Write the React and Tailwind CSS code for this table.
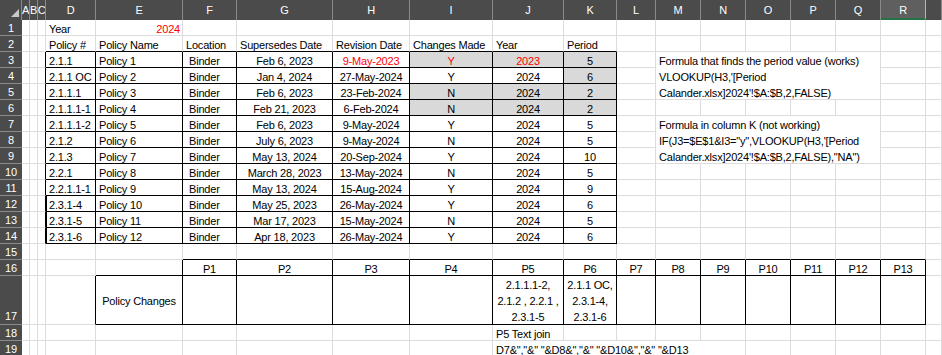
import clsx from 'clsx';

const COLS = ['A', 'B', 'C', 'D', 'E', 'F', 'G', 'H', 'I', 'J', 'K', 'L', 'M', 'N', 'O', 'P', 'Q', 'R', 'S'];
const ROWS = Array.from({ length: 19 }, (_, i) => i + 1);

const policies = [
  ['2.1.1', 'Policy 1', 'Feb 6, 2023', '9-May-2023', 'Y', '2023', '5'],
  ['2.1.1 OC', 'Policy 2', 'Jan 4, 2024', '27-May-2024', 'Y', '2024', '6'],
  ['2.1.1.1', 'Policy 3', 'Feb 6, 2023', '23-Feb-2024', 'N', '2024', '2'],
  ['2.1.1.1-1', 'Policy 4', 'Feb 21, 2023', '6-Feb-2024', 'N', '2024', '2'],
  ['2.1.1.1-2', 'Policy 5', 'Feb 6, 2023', '9-May-2024', 'Y', '2024', '5'],
  ['2.1.2', 'Policy 6', 'July 6, 2023', '9-May-2024', 'N', '2024', '5'],
  ['2.1.3', 'Policy 7', 'May 13, 2024', '20-Sep-2024', 'Y', '2024', '10'],
  ['2.2.1', 'Policy 8', 'March 28, 2023', '13-May-2024', 'N', '2024', '5'],
  ['2.2.1.1-1', 'Policy 9', 'May 13, 2024', '15-Aug-2024', 'Y', '2024', '9'],
  ['2.3.1-4', 'Policy 10', 'May 25, 2023', '26-May-2024', 'Y', '2024', '6'],
  ['2.3.1-5', 'Policy 11', 'Mar 17, 2023', '15-May-2024', 'N', '2024', '5'],
  ['2.3.1-6', 'Policy 12', 'Apr 18, 2023', '26-May-2024', 'Y', '2024', '6'],
];

const GRAY = ['I3', 'J3', 'K3', 'K4', 'I5', 'J5', 'K5', 'I6', 'J6', 'K6'];
const RED = ['E1', 'H3', 'I3', 'J3'];

// build the sheet contents
const cells = {
  D1: { v: 'Year' },
  E1: { v: '2024', al: 'right' },
  D2: { v: 'Policy #' },
  E2: { v: 'Policy Name' },
  F2: { v: 'Location' },
  G2: { v: 'Supersedes Date' },
  H2: { v: 'Revision Date' },
  I2: { v: 'Changes Made' },
  J2: { v: 'Year' },
  K2: { v: 'Period' },
  M3: {
    lines: ['Formula that finds the period value (works)', "VLOOKUP(H3,'[Period", "Calander.xlsx]2024'!$A:$B,2,FALSE)"],
    cs: 5,
    rs: 3,
  },
  M7: {
    lines: ['Formula in column K (not working)', 'IF(J3=$E$1&I3="y",VLOOKUP(H3,\'[Period', 'Calander.xlsx]2024\'!$A:$B,2,FALSE),"NA")'],
    cs: 5,
    rs: 3,
  },
  E17: { v: 'Policy Changes', al: 'center', mid: true },
  J17: { lines: ['2.1.1.1-2,', '2.1.2 , 2.2.1 ,', '2.3.1-5'], al: 'center', mid: true },
  K17: { lines: ['2.1.1 OC,', '2.3.1-4,', '2.3.1-6'], al: 'center', mid: true },
  J18: { v: 'P5 Text join' },
  J19: { v: 'D7&","&" "&D8&","&" "&D10&","&" "&D13', cs: 5 },
};

policies.forEach((p, i) => {
  const r = i + 3;
  cells['D' + r] = { v: p[0] };
  cells['E' + r] = { v: p[1] };
  cells['F' + r] = { v: 'Binder', indent: true };
  cells['G' + r] = { v: p[2], al: 'center' };
  cells['H' + r] = { v: p[3], al: 'center' };
  cells['I' + r] = { v: p[4], al: 'center' };
  cells['J' + r] = { v: p[5], al: 'center' };
  cells['K' + r] = { v: p[6], al: 'center' };
});

COLS.slice(5, 18).forEach((c, i) => {
  cells[c + '16'] = { v: 'P' + (i + 1), al: 'center' };
});

const inRange = (n, a, b) => n >= a && n <= b;

// c is 1-based column index (A = 1)
const rightBlack = (r, c) =>
  (inRange(r, 3, 14) && inRange(c, 3, 11)) || (r === 16 && inRange(c, 5, 18)) || (r === 17 && inRange(c, 4, 18));

const bottomBlack = (r, c) =>
  (inRange(r, 2, 14) && inRange(c, 4, 11)) || (r === 15 && inRange(c, 6, 18)) || (inRange(r, 16, 17) && inRange(c, 5, 18));

// cells hidden under merges
const covered = new Set();
Object.entries(cells).forEach(([key, d]) => {
  if (!d.cs && !d.rs) return;
  const c = COLS.indexOf(key[0]);
  const r = Number(key.slice(1));
  for (let dr = 0; dr < (d.rs || 1); dr++) {
    for (let dc = 0; dc < (d.cs || 1); dc++) {
      if (dr || dc) covered.add(COLS[c + dc] + (r + dr));
    }
  }
});

function Corner() {
  return (
    <div className="bg-[#4b4b4b] border-r border-r-[#8a8a8a] relative">
      <svg className="absolute left-[10px] top-[8px]" width="10" height="10" viewBox="0 0 10 10">
        <polygon points="1,9 9,9 9,1" fill="#c8c8c8" />
      </svg>
    </div>
  );
}

function Cell({ id, r, c }) {
  const d = cells[id] || {};
  const rb = !d.cs && rightBlack(r, c);
  const bb = !d.rs && bottomBlack(r, c);

  return (
    <div
      className={clsx(
        'overflow-hidden whitespace-nowrap border-r border-b leading-[16px]',
        rb ? 'border-r-black' : 'border-r-[#dcdcdc]',
        bb ? 'border-b-black' : 'border-b-[#dcdcdc]',
        d.cs === 5 && 'col-span-5',
        d.rs === 3 && 'row-span-3',
        GRAY.includes(id) && 'bg-[#d9d9d9]',
        RED.includes(id) ? 'text-[#ff0000]' : 'text-black',
        d.al === 'center' ? 'text-center' : d.al === 'right' ? 'text-right pr-[2px]' : d.indent ? 'pl-[6px]' : 'pl-[3px]',
        d.mid ? 'flex flex-col justify-center pt-[2px] leading-[15.5px]' : 'pt-[1px]',
        id === 'D12' && 'shadow-[inset_1px_0_0_#000]',
        id === 'D13' && 'shadow-[inset_1px_0_0_#000]',
        id === 'D14' && 'shadow-[inset_1px_0_0_#000]'
      )}
    >
      {d.lines ? d.lines.map((l) => <div key={l}>{l}</div>) : d.v}
    </div>
  );
}

export default function App() {
  return (
    <div className="w-[942px] h-[355px] overflow-hidden bg-white font-['Liberation_Sans',Arial,sans-serif] text-[11px] tracking-[-0.2px]">
      <div className="grid grid-cols-[22px_8px_8px_8px_50px_87px_54px_96px_77px_83px_71px_53px_39px_45px_45px_45px_45px_45px_45px_16px] grid-rows-[20px_repeat(16,16px)_49px_16px_16px]">
        <Corner />
        {COLS.map((c) => (
          <div
            key={c}
            className={clsx(
              'flex items-center justify-center overflow-hidden border-r text-white',
              c === 'R' ? 'bg-[#5f5f5f] border-r-[#b5b5b5] border-b-2 border-b-[#217346] pt-[2px]' : 'bg-[#4b4b4b] border-r-[#8a8a8a]'
            )}
          >
            {c === 'S' ? '' : c}
          </div>
        ))}

        {ROWS.map((r) => [
          <div
            key={'h' + r}
            className={clsx(
              'flex justify-center bg-[#4b4b4b] border-b border-b-[#8a8a8a] text-white leading-[16px]',
              r === 17 ? 'items-end' : 'items-center'
            )}
          >
            {r}
          </div>,
          ...COLS.map((c, i) => {
            const id = c + r;
            if (covered.has(id)) return null;
            return <Cell key={id} id={id} r={r} c={i + 1} />;
          }),
        ])}
      </div>
    </div>
  );
}
